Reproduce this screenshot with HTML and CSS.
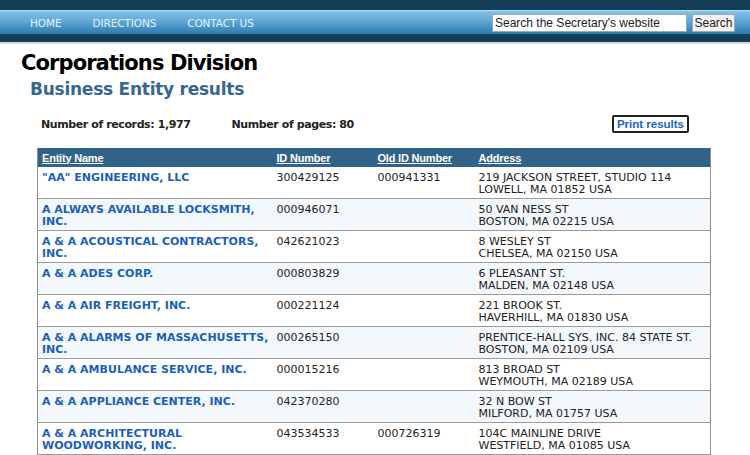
FILE: index.html
```html
<!DOCTYPE html>
<html lang="en">

<head>
    <meta charset="UTF-8">
    <title>Business Entity results</title>
    <link rel="stylesheet" href="styles.css">
</head>

<body>

    <header class="topbar">
        <div class="navbar">
            <nav class="menu">
                <a href="#">HOME</a>
                <a href="#">DIRECTIONS</a>
                <a href="#">CONTACT US</a>
            </nav>
            <form class="search">
                <input type="text" value="Search the Secretary's website">
                <button type="button">Search</button>
            </form>
        </div>
    </header>

    <main class="content">
        <h1>Corporations Division</h1>
        <h2>Business Entity results</h2>

        <div class="summary">
            <span class="count">Number of records: 1,977</span>
            <span class="count">Number of pages: 80</span>
            <button type="button" class="print">Print results</button>
        </div>

        <table class="results">
            <colgroup>
                <col class="c-name">
                <col class="c-id">
                <col class="c-old">
                <col class="c-addr">
            </colgroup>
            <thead>
                <tr>
                    <th><a href="#">Entity Name</a></th>
                    <th><a href="#">ID Number</a></th>
                    <th><a href="#">Old ID Number</a></th>
                    <th><a href="#">Address</a></th>
                </tr>
            </thead>
            <tbody>
                <tr>
                    <td><a href="#">"AA" ENGINEERING, LLC</a></td>
                    <td>300429125</td>
                    <td>000941331</td>
                    <td>219 JACKSON STREET, STUDIO 114<br>LOWELL, MA 01852 USA</td>
                </tr>
                <tr>
                    <td><a href="#">A ALWAYS AVAILABLE LOCKSMITH, INC.</a></td>
                    <td>000946071</td>
                    <td></td>
                    <td>50 VAN NESS ST<br>BOSTON, MA 02215 USA</td>
                </tr>
                <tr>
                    <td><a href="#">A &amp; A ACOUSTICAL CONTRACTORS, INC.</a></td>
                    <td>042621023</td>
                    <td></td>
                    <td>8 WESLEY ST<br>CHELSEA, MA 02150 USA</td>
                </tr>
                <tr>
                    <td><a href="#">A &amp; A ADES CORP.</a></td>
                    <td>000803829</td>
                    <td></td>
                    <td>6 PLEASANT ST.<br>MALDEN, MA 02148 USA</td>
                </tr>
                <tr>
                    <td><a href="#">A &amp; A AIR FREIGHT, INC.</a></td>
                    <td>000221124</td>
                    <td></td>
                    <td>221 BROOK ST.<br>HAVERHILL, MA 01830 USA</td>
                </tr>
                <tr>
                    <td><a href="#">A &amp; A ALARMS OF MASSACHUSETTS, INC.</a></td>
                    <td>000265150</td>
                    <td></td>
                    <td>PRENTICE-HALL SYS. INC. 84 STATE ST.<br>BOSTON, MA 02109 USA</td>
                </tr>
                <tr>
                    <td><a href="#">A &amp; A AMBULANCE SERVICE, INC.</a></td>
                    <td>000015216</td>
                    <td></td>
                    <td>813 BROAD ST<br>WEYMOUTH, MA 02189 USA</td>
                </tr>
                <tr>
                    <td><a href="#">A &amp; A APPLIANCE CENTER, INC.</a></td>
                    <td>042370280</td>
                    <td></td>
                    <td>32 N BOW ST<br>MILFORD, MA 01757 USA</td>
                </tr>
                <tr>
                    <td><a href="#">A &amp; A ARCHITECTURAL WOODWORKING, INC.</a></td>
                    <td>043534533</td>
                    <td>000726319</td>
                    <td>104C MAINLINE DRIVE<br>WESTFIELD, MA 01085 USA</td>
                </tr>
            </tbody>
        </table>
    </main>

</body>

</html>
```

FILE: styles.css
```css
body {
    margin: 0;
    background-color: white;
    font-family: "DejaVu Sans", Verdana, sans-serif;
    color: #222;
}

/* top navigation */
.topbar {
    background-color: #133c55;
    padding: 10px 0 8px;
    border-bottom: 2px solid #c9dce8;
}

.navbar {
    display: flex;
    align-items: center;
    justify-content: space-between;
    height: 23px;
    border-top: 1px solid #b7dcf2;
    background: linear-gradient(#86c3e9, #5aa3d3 50%, #2e7aad);
}

.menu {
    display: flex;
    padding-left: 30px;
}

.menu a {
    color: #e6f2fb;
    text-decoration: none;
    font-size: 10.5px;
    letter-spacing: -0.1px;
    margin-right: 31px;
}

.search {
    display: flex;
    gap: 5px;
    padding-right: 15px;
}

.search input {
    width: 189px;
    height: 16px;
    padding: 0 2px;
    margin: 0;
    border: 1px solid #9aa8b4;
    font-family: "Liberation Sans", Arial, sans-serif;
    font-size: 12px;
    color: #222;
}

.search button {
    width: 43px;
    height: 18px;
    padding: 0;
    margin: 0;
    border: 1px solid #9aa8b4;
    background-color: #f2f2f2;
    font-family: "Liberation Sans", Arial, sans-serif;
    font-size: 12px;
    color: #222;
}

/* page body */
.content {
    padding: 0 0 0 21px;
}

h1 {
    margin: 7px 0 0;
    font-size: 21px;
    letter-spacing: -0.9px;
    color: black;
}

h2 {
    margin: 4px 0 0 9px;
    font-size: 17px;
    letter-spacing: -0.25px;
    color: #36678f;
}

.summary {
    display: flex;
    align-items: center;
    margin: 16px 0 0 20px;
    width: 648px;
    font-size: 11px;
    font-weight: bold;
    letter-spacing: -0.4px;
}

.count {
    margin-right: 41px;
}

.print {
    margin-left: auto;
    padding: 1px 3px;
    border: 2px solid #222;
    border-radius: 2px;
    background-color: white;
    font-family: "Liberation Sans", Tahoma, sans-serif;
    font-size: 11.5px;
    font-weight: bold;
    letter-spacing: 0;
    color: #1b62c6;
}

/* results table */
.results {
    margin: 15px 0 0 16px;
    border-collapse: collapse;
    table-layout: fixed;
    width: 673px;
    font-size: 11px;
    border-left: 1px solid #8c8c8c;
    border-right: 1px solid #8c8c8c;
}

.c-name { width: 235px; }
.c-id { width: 101px; }
.c-old { width: 101px; }
.c-addr { width: 236px; }

.results th {
    height: 19px;
    padding: 0 4px;
    text-align: left;
    background-color: #306387;
    font-family: "Liberation Sans", Tahoma, sans-serif;
    font-size: 11px;
    letter-spacing: -0.2px;
}

.results th a {
    color: white;
}

.results td {
    height: 24px;
    padding: 5px 4px 2px;
    vertical-align: top;
    line-height: 12px;
    border-bottom: 1px solid #9a9a9a;
}

.results tbody tr:nth-child(even) {
    background-color: #f3f8fc;
}

.results td a {
    color: #1a5fba;
    font-weight: bold;
    text-decoration: none;
}
```
